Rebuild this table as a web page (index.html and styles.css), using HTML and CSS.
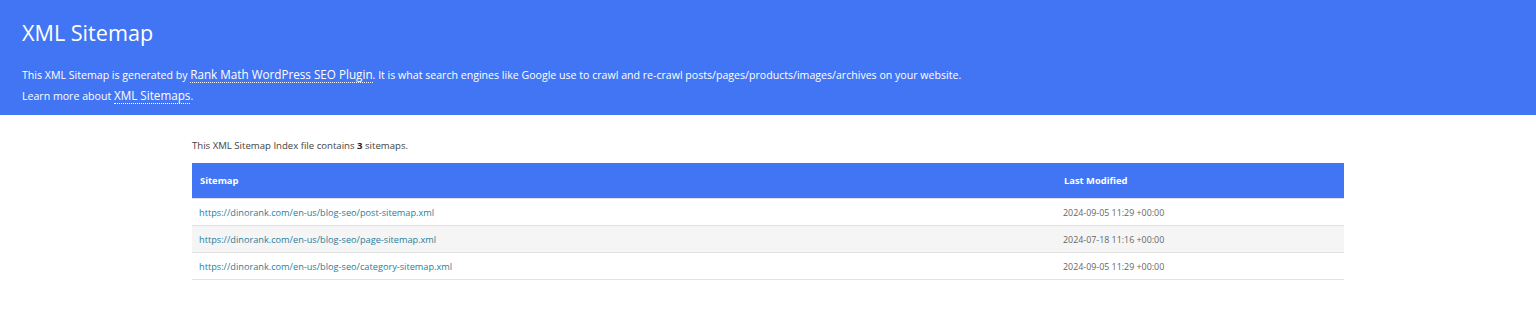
FILE: index.html
```html
<!DOCTYPE html>
<html lang="en">
<head>
<meta charset="utf-8">
<title>XML Sitemap</title>
<link rel="stylesheet" href="styles.css">
</head>
<body>
<header class="header">
  <h1 class="header__title">XML Sitemap</h1>
  <p class="header__text">This XML Sitemap is generated by <a class="header__link" href="#">Rank Math WordPress SEO Plugin</a>. It is what search engines like Google use to crawl and re-crawl posts/pages/products/images/archives on your website.<br>Learn more about <a class="header__link" href="#">XML Sitemaps</a>.</p>
</header>
<main class="content">
  <p class="expl">This XML Sitemap Index file contains <strong>3</strong> sitemaps.</p>
  <table class="sitemap">
    <thead>
      <tr>
        <th class="sitemap__col-loc">Sitemap</th>
        <th class="sitemap__col-mod">Last Modified</th>
      </tr>
    </thead>
    <tbody>
      <tr>
        <td><a class="sitemap__link" href="#">https://dinorank.com/en-us/blog-seo/post-sitemap.xml</a></td>
        <td class="sitemap__date">2024-09-05 11:29 +00:00</td>
      </tr>
      <tr>
        <td><a class="sitemap__link" href="#">https://dinorank.com/en-us/blog-seo/page-sitemap.xml</a></td>
        <td class="sitemap__date">2024-07-18 11:16 +00:00</td>
      </tr>
      <tr>
        <td><a class="sitemap__link" href="#">https://dinorank.com/en-us/blog-seo/category-sitemap.xml</a></td>
        <td class="sitemap__date">2024-09-05 11:29 +00:00</td>
      </tr>
    </tbody>
  </table>
</main>
</body>
</html>
```

FILE: styles.css
```css
body {
  margin: 0;
  font-family: "Open Sans", "Noto Sans", sans-serif;
  color: #555;
  background: #fff;
}

.header {
  background: #4275f4;
  color: #fff;
  padding: 19px 22px 12px;
  height: 115px;
  box-sizing: border-box;
}

.header__title {
  margin: 0;
  font-size: 21.6px;
  font-weight: 400;
  line-height: 28px;
}

.header__text {
  margin: 17px 0 0;
  font-size: 10.6px;
  line-height: 20px;
}

.header__link {
  color: #fff;
  text-decoration: none;
  border-bottom: 1px dotted #fff;
  font-size: 11.7px;
}

.content {
  width: 75%;
  margin: 0 auto;
}

.expl {
  margin: 22px 0 8px;
  font-size: 9.6px;
  line-height: 18px;
  color: #444;
}

.expl strong {
  color: #222;
}

.sitemap {
  width: 100%;
  border-collapse: collapse;
  font-size: 9.2px;
}

.sitemap th {
  background: #4275f4;
  color: #fff;
  text-align: left;
  height: 35px;
  padding: 0 8px;
  font-size: 9.4px;
  font-weight: 700;
  border-bottom: 1px solid #e2e2e2;
}

.sitemap__col-loc {
  width: 75%;
}

.sitemap td {
  height: 26px;
  padding: 0 7px;
  border-bottom: 1px solid #e2e2e2;
  color: #666;
}

.sitemap td.sitemap__date {
  font-size: 8.9px;
}

.sitemap tbody tr:nth-child(even) td {
  background: #f5f5f5;
}

.sitemap__link {
  color: #2a7e9c;
  text-decoration: none;
}
```
